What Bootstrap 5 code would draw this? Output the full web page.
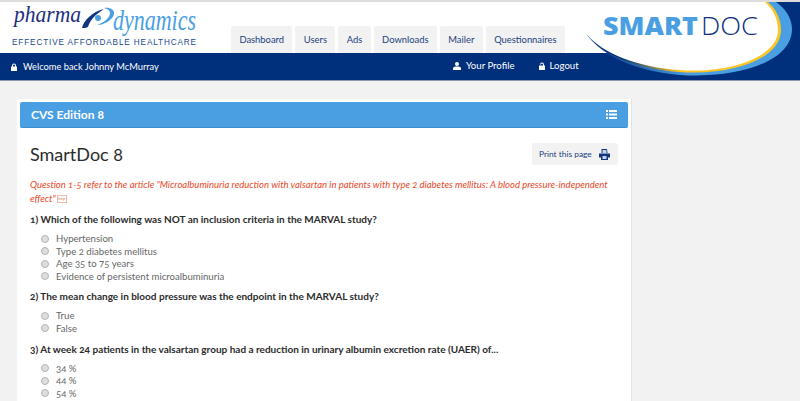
<!DOCTYPE html>
<html lang="en"><head><meta charset="utf-8"><title>SmartDoc</title>
<link href="https://cdn.jsdelivr.net/npm/bootstrap@5.3.0/dist/css/bootstrap.min.css" rel="stylesheet">
<style>
html,body{height:401px;overflow:hidden}
body{background:#f2f2f2;font-family:Lato,"Open Sans","Liberation Sans",sans-serif;font-size:10px;color:#333;font-variant-numeric:oldstyle-nums;border-top:2px solid #ddd;position:relative}
.topwhite{background:#fff;height:51px}
.logo-box{width:231px;flex:none}
.logo-svg{display:block;overflow:visible}
.tabnav{gap:3px;height:27px;margin-top:24px}
.tabnav .nav-link{background:#f2f2f2;color:#1c3f7c;font-size:9.4px;padding:0 8.4px;line-height:27px;height:27px;border-radius:2px 2px 0 0}
.userbar{background:#002f7b;height:28px;border-bottom:1px solid #8a97ad;color:#fff;font-size:9.3px;padding:0 0 0 10px}
.userbar span.ut{margin-left:5px}
.ico{fill:#fff;display:block;flex:none}
.u-right{margin-left:294px;gap:23.500px;font-size:9.6px}
.userbar span.ut-close{margin-left:3.500px}
.brand-art{position:absolute;top:0;right:0}
.sheet{width:614px;margin:18px 0 0 17px;background:#fff;border:0;border-radius:0;padding:3px;box-shadow:1px 0 0 #e4e4e4;height:320px}
.sheet-head{background:#4a9fe3;color:#fff;height:26px;font-size:12px;font-weight:700;padding:0 11px;border-radius:2px;border-bottom:1px solid #3d8dcf}
.sheet-body{padding:14px 10px 0 10px}
.doc-title{font-size:18px;font-weight:400;margin:0;color:#2b2b2b;line-height:24px}
.print-btn{background:#f2f2f2;color:#1c3f7c;font-size:8.4px;height:22px;width:86px;padding:0 7px;border:0;border-radius:2px;gap:7px;white-space:nowrap}
.intro{color:#e8471f;font-style:italic;font-size:9.5px;line-height:14px;margin:12px 0 0;}
.nb{display:inline-block;width:10px;height:8px;border:1px solid #eeb9a6;margin-left:1px;font-size:4.500px;line-height:6px;font-style:normal;text-align:center;vertical-align:-1px;color:#e8825f;overflow:hidden}
.qq{font-weight:700;font-size:10px;color:#2b2b2b;line-height:13px;margin:7px 0 0}
.ops{margin:6px 0 0;padding-left:11px}
.ops .form-check{min-height:0;margin:0;padding-left:15px;height:12.6px;line-height:13px;color:#666;font-size:9.6px}
.ops .form-check-input{width:8px;height:8px;margin:2.5px 0 0 -15px;background-color:#ddd;border:1px solid #b5b5b5}
.ops + .qq{margin-top:8px}
</style></head><body>
<header class="topwhite d-flex">
<div class="logo-box">
<svg class="logo-svg" width="231" height="51" viewBox="0 2 231 51">
<text x="14" y="22" font-family="Liberation Serif" font-style="italic" font-size="24" fill="#1d2f7f" textLength="67" lengthAdjust="spacingAndGlyphs">pharma</text>
<path d="M82 28C84 20 92 12 104 9C96 14 90 20 88 27C86 28 84 28 82 28Z" fill="#12357f"/>
<path d="M104 8C110 7 115 10 114 14C113 20 104 25 97 25C103 23 110 18 110 13C110 10 107 9 104 8Z" fill="#4a9fe3"/>
<circle cx="98" cy="18" r="3" fill="#4a9fe3"/>
<text x="113" y="30" font-family="Liberation Serif" font-style="italic" font-size="29" fill="#4a9fe3" textLength="83" lengthAdjust="spacingAndGlyphs">dynamics</text>
<text x="12" y="45" font-family="Liberation Sans" font-size="8.2" fill="#23488c" textLength="184">EFFECTIVE AFFORDABLE HEALTHCARE</text>
</svg></div>
<nav class="nav tabnav">
<a class="nav-link" href="#">Dashboard</a><a class="nav-link" href="#">Users</a><a class="nav-link" href="#">Ads</a><a class="nav-link" href="#">Downloads</a><a class="nav-link" href="#">Mailer</a><a class="nav-link" href="#">Questionnaires</a>
</nav>
</header>
<div class="userbar d-flex align-items-center">
<svg class="ico" width="8" height="8" viewBox="0 0 8 8"><path d="M2 3.500V2.500a2 2 0 0 1 4 0v1h1V8H1V3.500ZM3 3.500h2V2.500a1 1 0 0 0-2 0Z"/></svg>
<span class="ut">Welcome back Johnny McMurray</span>
<div class="d-flex u-right">
<div class="d-flex align-items-center"><svg class="ico" width="8" height="8" viewBox="0 0 8 8"><circle cx="4" cy="2" r="2"/><path d="M0 8V6.500C0 5 1.500 4.500 4 4.500S8 5 8 6.500V8Z"/></svg><span class="ut">Your Profile</span></div>
<div class="d-flex align-items-center"><svg class="ico" width="8" height="8" viewBox="0 0 8 8"><path d="M1 3.500H5V2.500a1 1 0 0 0-2 0H2a2 2 0 0 1 4 0v1h1V8H1Z"/></svg><span class="ut ut-close">Logout</span></div>
</div></div>
<svg class="brand-art" width="230" height="80" viewBox="0 2 230 80">
<defs>
<linearGradient id="g1" x1="17" x2="120" y1="0" y2="0" gradientUnits="userSpaceOnUse"><stop offset="0" stop-color="#002f7b"/><stop offset="1" stop-color="#4a9fe3"/></linearGradient>
<linearGradient id="g2" x1="50" x2="110" y1="0" y2="0" gradientUnits="userSpaceOnUse"><stop offset="0" stop-color="#002f7b"/><stop offset="1" stop-color="#fdc525"/></linearGradient>
</defs>
<rect x="205" y="0" width="25" height="60" fill="#002f7b"/>
<path d="M17 35C40 65 90 76 127 75.500C180 75 222 58 222 29C222 18 215 8 206 2H190C130 30 60 40 17 35Z" fill="url(#g1)"/>
<path d="M17 35C40 63 90 73 125 72.500C172 72 211 56 211 30C211 18 205 8 198 2H190C130 30 60 40 17 35Z" fill="url(#g2)"/>
<path d="M17 35C40 61 90 71 125 70.500C170 70 208 54 208 30C208 18 202 8 195 2H10V35Z" fill="#fff"/>
<text x="33" y="35" font-family="Open Sans" font-weight="800" font-size="25" fill="#4a9fe3" textLength="95" lengthAdjust="spacingAndGlyphs" style="font-variant-numeric:normal">SMART</text>
<text x="131" y="35" font-family="Open Sans" font-weight="300" font-size="25" fill="#0f2f80" textLength="57" lengthAdjust="spacingAndGlyphs" style="font-variant-numeric:normal">DOC</text>
</svg>
<main class="card sheet">
<div class="sheet-head d-flex align-items-center justify-content-between"><span>CVS Edition 8</span>
<svg width="11" height="9" viewBox="0 0 11 9" fill="#fff"><path d="M0 0h2v2H0zM3 0h8v2H3zM0 3.500h2v2H0zM3 3.500h8v2H3zM0 7h2v2H0zM3 7h8v2H3z"/></svg></div>
<div class="sheet-body">
<div class="d-flex justify-content-between align-items-center"><h1 class="doc-title">SmartDoc 8</h1>
<button class="btn print-btn d-flex align-items-center" type="button">Print this page
<svg width="11" height="11" viewBox="0 0 11 11"><path d="M2.500 0H8L8.500 4H2.500ZM0 4.500H11V8.500H9V11H2V8.500H0Z" fill="#12357f"/><path d="M3.500 7H7.500V10H3.500ZM3.500 1H7.500V4H3.500Z" fill="#c9d3e6"/></svg></button></div>
<p class="intro">Question 1-5 refer to the article "Microalbuminuria reduction with valsartan in patients with type 2 diabetes mellitus: A blood <span class="text-nowrap">pressure-independent</span> effect"<span class="nb">bsp</span></p>
<p class="qq">1) Which of the following was NOT an inclusion criteria in the MARVAL study?</p>
<div class="ops">
<div class="form-check"><input class="form-check-input" type="radio" name="q1" id="a1"><label for="a1">Hypertension</label></div>
<div class="form-check"><input class="form-check-input" type="radio" name="q1" id="a2"><label for="a2">Type 2 diabetes mellitus</label></div>
<div class="form-check"><input class="form-check-input" type="radio" name="q1" id="a3"><label for="a3">Age 35 to 75 years</label></div>
<div class="form-check"><input class="form-check-input" type="radio" name="q1" id="a4"><label for="a4">Evidence of persistent microalbuminuria</label></div>
</div>
<p class="qq">2) The mean change in blood pressure was the endpoint in the MARVAL study?</p>
<div class="ops">
<div class="form-check"><input class="form-check-input" type="radio" name="q2" id="b1"><label for="b1">True</label></div>
<div class="form-check"><input class="form-check-input" type="radio" name="q2" id="b2"><label for="b2">False</label></div>
</div>
<p class="qq">3) At week 24 patients in the valsartan group had a reduction in urinary albumin excretion rate (UAER) of...</p>
<div class="ops">
<div class="form-check"><input class="form-check-input" type="radio" name="q3" id="c1"><label for="c1">34 %</label></div>
<div class="form-check"><input class="form-check-input" type="radio" name="q3" id="c2"><label for="c2">44 %</label></div>
<div class="form-check"><input class="form-check-input" type="radio" name="q3" id="c3"><label for="c3">54 %</label></div>
</div>
</div></main>
</body></html>
